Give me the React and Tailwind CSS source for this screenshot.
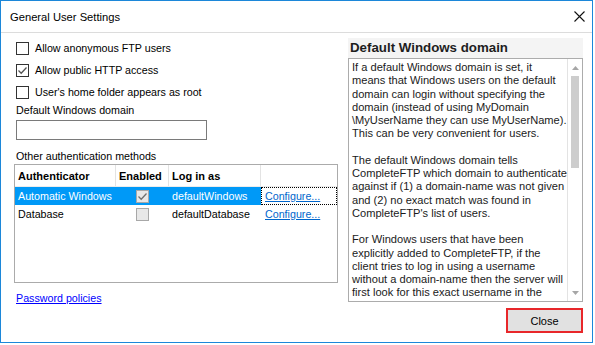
import React from 'react'

const helpLines = [
  'If a default Windows domain is set, it',
  'means that Windows users on the default',
  'domain can login without specifying the',
  'domain (instead of using MyDomain',
  '\\MyUserName they can use MyUserName).',
  'This can be very convenient for users.',
  '',
  'The default Windows domain tells',
  'CompleteFTP which domain to authenticate',
  'against if (1) a domain-name was not given',
  'and (2) no exact match was found in',
  "CompleteFTP's list of users.",
  '',
  'For Windows users that have been',
  'explicitly added to CompleteFTP, if the',
  'client tries to log in using a username',
  'without a domain-name then the server will',
  'first look for this exact username in the',
]

function Check({ checked, muted }) {
  return (
    <span
      className={
        muted
          ? 'w-[13px] h-[13px] border border-[#a8a8a8] bg-[#e8e8e8] flex items-center justify-center shrink-0'
          : 'w-[13px] h-[13px] border border-[#333333] bg-white flex items-center justify-center shrink-0'
      }
    >
      {checked && (
        <svg width="11" height="11" viewBox="0 0 11 11">
          <path d="M1.5 5.5 L4.2 8.2 L9.5 2.5" fill="none" stroke={muted ? '#707070' : '#555555'} strokeWidth="1.3" />
        </svg>
      )}
    </span>
  )
}

function CheckRow({ label, checked }) {
  return (
    <div className="h-[22px] flex items-center gap-[6px] pl-[2px]">
      <Check checked={checked} />
      <span>{label}</span>
    </div>
  )
}

export default function App() {
  return (
    <div className="w-[595px] h-[345px] bg-white text-[10.7px] leading-[14px] text-black font-['Liberation_Sans',Arial,sans-serif]">
      <div className="w-[593px] h-[343px] border border-[#1c87d9] flex flex-col">
        {/* title bar */}
        <div className="h-[32px] shrink-0 flex items-center justify-between pl-[9px] pr-[7px] border-b border-[#dcdcdc]">
          <span className="text-[11.2px]">General User Settings</span>
          <svg width="11" height="11" viewBox="0 0 11 11">
            <path d="M0.5 0.5 L10.5 10.5 M10.5 0.5 L0.5 10.5" stroke="#111" strokeWidth="1.1" />
          </svg>
        </div>

        <div className="flex-1 flex pl-[13px]">
          {/* left */}
          <div className="w-[324px] flex flex-col pt-[4px]">
            <CheckRow label="Allow anonymous FTP users" />
            <CheckRow label="Allow public HTTP access" checked />
            <CheckRow label="User's home folder appears as root" />
            <div className="pl-[2px] h-[14px]">Default Windows domain</div>
            <div className="ml-[2px] mt-[3px] w-[191px] h-[20px] border border-[#7a7a7a] bg-white" />
            <div className="pl-[2px] mt-[9px] h-[14px]">Other authentication methods</div>
            <div className="mt-[1px] h-[119px] border border-[#ababab] bg-white">
              <div className="flex h-[22px] font-bold text-[11px] border-b border-[#ececec]">
                <div className="w-[101px] border-r border-[#e3e3e3] flex items-center pl-[3px]">Authenticator</div>
                <div className="w-[53px] border-r border-[#e3e3e3] flex items-center pl-[3px]">Enabled</div>
                <div className="w-[92px] border-r border-[#e3e3e3] flex items-center pl-[3px]">Log in as</div>
                <div className="flex-1" />
              </div>
              <div className="flex h-[18px]">
                <div className="w-[246px] flex bg-[#0099f7] text-white">
                  <div className="w-[101px] flex items-center pl-[3px]">Automatic Windows</div>
                  <div className="w-[53px] flex items-center justify-center">
                    <Check checked muted />
                  </div>
                  <div className="w-[92px] flex items-center pl-[3px]">defaultWindows</div>
                </div>
                <div className="flex-1 flex items-center pl-[3px] border border-dotted border-black">
                  <span className="text-[#0066cc] underline">Configure...</span>
                </div>
              </div>
              <div className="flex h-[18px]">
                <div className="w-[101px] flex items-center pl-[3px]">Database</div>
                <div className="w-[53px] flex items-center justify-center">
                  <Check muted />
                </div>
                <div className="w-[92px] flex items-center pl-[3px]">defaultDatabase</div>
                <div className="flex-1 flex items-center pl-[4px]">
                  <span className="text-[#0066cc] underline">Configure...</span>
                </div>
              </div>
            </div>
            <div className="pl-[2px] mt-[8px] h-[14px]">
              <span className="text-[#0000ff] underline">Password policies</span>
            </div>
          </div>

          {/* right */}
          <div className="ml-[10px] w-[235px] flex flex-col pt-[5px]">
            <div className="h-[20px] bg-[#f4f4f4] flex items-center pl-[2px] font-bold text-[13.3px] text-[#1e1e1e]">
              Default Windows domain
            </div>
            <div className="h-[244px] border border-[#acacac] flex bg-white overflow-hidden">
              <div className="flex-1 pl-[3px] pt-[2px] text-[11.1px] leading-[13.25px] text-[#1a1a1a]">
                {helpLines.map((line, i) => (
                  <div key={i} className="whitespace-nowrap h-[13.25px]">{line}</div>
                ))}
              </div>
              <div className="w-[17px] border-l border-[#e3e3e3] flex flex-col items-center">
                <div className="h-[17px] flex items-center justify-center">
                  <svg width="7" height="4" viewBox="0 0 7 4"><path d="M0 4 L3.5 0 L7 4 Z" fill="#a6a6a6" /></svg>
                </div>
                <div className="w-[8px] h-[92px] bg-[#cdcdcd]" />
                <div className="flex-1" />
                <div className="h-[17px] flex items-center justify-center">
                  <svg width="7" height="4" viewBox="0 0 7 4"><path d="M0 0 L3.5 4 L7 0 Z" fill="#a6a6a6" /></svg>
                </div>
              </div>
            </div>
            <div className="mt-[6px] self-end w-[77px] h-[25px] border-2 border-[#e8272a] bg-[#e1e1e1] flex items-center justify-center text-[11px]">
              Close
            </div>
          </div>
        </div>
      </div>
    </div>
  )
}
